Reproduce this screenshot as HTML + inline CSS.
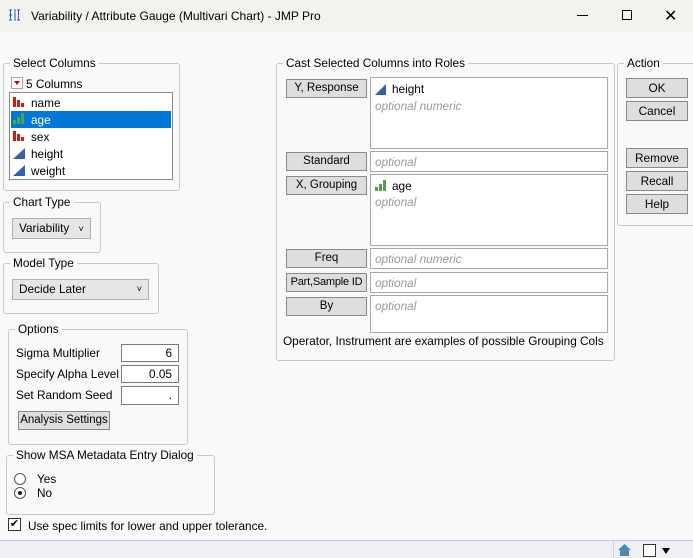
<!DOCTYPE html>
<html><head><meta charset="utf-8"><style>
*{margin:0;padding:0;box-sizing:border-box}
body{width:693px;height:558px;overflow:hidden;background:#f9f9f9;font-family:"Liberation Sans",sans-serif;font-size:11.8px;color:#000;position:relative}
div{white-space:nowrap}
.a{position:absolute}
.title{left:0;top:0;width:693px;height:32px;background:#f2f2ee}
.grp{position:absolute;border:1px solid #c8c8c8;border-radius:3px}
.lbl{position:absolute;top:-8px;left:6px;background:#f9f9f9;padding:0 3px;line-height:14px}
.btn{position:absolute;background:#dedede;border:1px solid #8a8a8a;text-align:center;font-size:11.5px;overflow:hidden}
.box{position:absolute;background:#fff;border:1px solid #a8a8a8}
.opt{color:#999;font-style:italic;position:absolute;left:4px}
.inp{position:absolute;background:#fff;border:1px solid #7a7a7a;text-align:right;padding-right:6px;line-height:16px}
.dd{position:absolute;background:#e6e6e6;border:1px solid #b0b0b0;line-height:19px;padding-left:6px}
.ab{position:absolute;left:626px;width:62px;height:20px;background:#dedede;border:1px solid #8a8a8a;text-align:center;line-height:18px}
</style></head><body>
<div class="a title"></div>
<svg class="a" style="left:8px;top:8px" width="14" height="14" viewBox="0 0 14 14"><g stroke="#3060a0" stroke-width="1" fill="none"><path d="M1 2h3M2.5 2v10M1 12h3M1 7h3M7 1v12M9 2h3M10.5 2v10M9 12h3"/></g></svg>
<div class="a" style="left:31px;top:9px;font-size:12px">Variability / Attribute Gauge (Multivari Chart) - JMP Pro</div>
<div class="a" style="left:577px;top:15px;width:11px;height:1px;background:#000"></div>
<div class="a" style="left:622px;top:10px;width:10px;height:10px;border:1px solid #000"></div>
<div class="a" style="left:664px;top:6px;font-size:16px">✕</div>

<div class="grp" style="left:3px;top:63px;width:177px;height:128px"><div class="lbl">Select Columns</div></div>
<div class="a" style="left:11px;top:77px;width:12px;height:12px;border:1px solid #aaa;background:#fff"><div style="position:absolute;left:2px;top:3px;border-left:3.5px solid transparent;border-right:3.5px solid transparent;border-top:4px solid #c00"></div></div>
<div class="a" style="left:26px;top:77px">5 Columns</div>
<div class="box" style="left:9px;top:92px;width:164px;height:88px;border-color:#888"></div>
<div class="a" style="left:11px;top:111px;width:160px;height:17px;background:#0078d7"></div>
<svg class="a" style="left:13px;top:95px" width="14" height="82" viewBox="0 0 14 82">
<g fill="#c8200e"><rect x="0" y="2" width="3" height="10"/><rect x="4" y="5" width="3" height="7"/><rect x="8" y="8" width="3" height="4"/>
<rect x="0" y="36" width="3" height="10"/><rect x="4" y="39" width="3" height="7"/><rect x="8" y="42" width="3" height="4"/></g>
<g fill="#4ca64c"><rect x="0" y="25" width="3" height="4"/><rect x="4" y="22" width="3" height="7"/><rect x="8" y="18" width="3" height="11"/></g>
<path d="M0 64L12 53V64Z M0 81L12 70V81Z" fill="#3060b0"/></svg>
<div class="a" style="left:31px;top:96px">name</div>
<div class="a" style="left:31px;top:113px;color:#fff">age</div>
<div class="a" style="left:31px;top:130px">sex</div>
<div class="a" style="left:31px;top:147px">height</div>
<div class="a" style="left:31px;top:164px">weight</div>

<div class="grp" style="left:3px;top:202px;width:98px;height:51px"><div class="lbl">Chart Type</div></div>
<div class="dd" style="left:12px;top:218px;width:79px;height:21px">Variability <span style="font-size:9px;margin-left:6px">˅</span></div>
<div class="grp" style="left:3px;top:263px;width:156px;height:51px"><div class="lbl">Model Type</div></div>
<div class="dd" style="left:12px;top:279px;width:137px;height:21px">Decide Later<span style="position:absolute;right:6px;font-size:9px">˅</span></div>

<div class="grp" style="left:8px;top:329px;width:180px;height:116px"><div class="lbl">Options</div></div>
<div class="a" style="left:16px;top:346px">Sigma Multiplier</div>
<div class="a" style="left:16px;top:367px">Specify Alpha Level</div>
<div class="a" style="left:16px;top:388px">Set Random Seed</div>
<div class="inp" style="left:121px;top:344px;width:58px;height:18px">6</div>
<div class="inp" style="left:121px;top:365px;width:58px;height:18px">0.05</div>
<div class="inp" style="left:121px;top:386px;width:58px;height:19px">.</div>
<div class="btn" style="left:18px;top:411px;width:92px;height:19px;line-height:17px">Analysis Settings</div>

<div class="grp" style="left:6px;top:455px;width:209px;height:60px"><div class="lbl">Show MSA Metadata Entry Dialog</div></div>
<div class="a" style="left:14px;top:473px;width:12px;height:12px;border:1px solid #555;border-radius:50%;background:#fff"></div>
<div class="a" style="left:37px;top:472px">Yes</div>
<div class="a" style="left:14px;top:487px;width:12px;height:12px;border:1px solid #555;border-radius:50%;background:#fff"><div style="position:absolute;left:3px;top:3px;width:4px;height:4px;border-radius:50%;background:#222"></div></div>
<div class="a" style="left:37px;top:486px">No</div>
<div class="a" style="left:8px;top:518px;width:13px;height:13px;border:1px solid #333;background:#fff;font-size:11px;line-height:11px;text-align:center">✔</div>
<div class="a" style="left:28px;top:519px">Use spec limits for lower and upper tolerance.</div>

<div class="grp" style="left:276px;top:63px;width:339px;height:298px"><div class="lbl">Cast Selected Columns into Roles</div></div>
<div class="btn" style="left:286px;top:79px;width:81px;height:19px;line-height:17px">Y, Response</div>
<div class="btn" style="left:286px;top:152px;width:81px;height:19px;line-height:17px">Standard</div>
<div class="btn" style="left:286px;top:176px;width:81px;height:19px;line-height:17px">X, Grouping</div>
<div class="btn" style="left:286px;top:249px;width:81px;height:19px;line-height:17px">Freq</div>
<div class="btn" style="left:286px;top:273px;width:81px;height:19px;line-height:17px;font-size:11px;letter-spacing:-0.2px">Part,Sample ID</div>
<div class="btn" style="left:286px;top:297px;width:81px;height:19px;line-height:17px">By</div>
<div class="box" style="left:370px;top:77px;width:238px;height:72px">
<svg class="a" style="left:4px;top:6px" width="12" height="11"><path d="M0 11L11 0V11Z" fill="#3060b0"/></svg>
<div class="a" style="left:21px;top:4px">height</div><div class="opt" style="top:21px">optional numeric</div></div>
<div class="box" style="left:370px;top:151px;width:238px;height:21px"><div class="opt" style="top:3px">optional</div></div>
<div class="box" style="left:370px;top:174px;width:238px;height:72px">
<svg class="a" style="left:4px;top:5px" width="12" height="11"><g fill="#4ca64c"><rect x="0" y="7" width="3" height="4"/><rect x="4" y="4" width="3" height="7"/><rect x="8" y="0" width="3" height="11"/></g></svg>
<div class="a" style="left:21px;top:4px">age</div><div class="opt" style="top:20px">optional</div></div>
<div class="box" style="left:370px;top:248px;width:238px;height:21px"><div class="opt" style="top:3px">optional numeric</div></div>
<div class="box" style="left:370px;top:272px;width:238px;height:21px"><div class="opt" style="top:3px">optional</div></div>
<div class="box" style="left:370px;top:295px;width:238px;height:38px"><div class="opt" style="top:3px">optional</div></div>
<div class="a" style="left:283px;top:334px">Operator, Instrument are examples of possible Grouping Cols</div>

<div class="grp" style="left:617px;top:63px;width:80px;height:163px"><div class="lbl">Action</div></div>
<div class="ab" style="top:78px">OK</div>
<div class="ab" style="top:101px">Cancel</div>
<div class="ab" style="top:148px">Remove</div>
<div class="ab" style="top:171px">Recall</div>
<div class="ab" style="top:194px">Help</div>

<div class="a" style="left:0;top:540px;width:693px;height:1px;background:#c0c8d8"></div>
<div class="a" style="left:0;top:541px;width:693px;height:17px;background:#eef0f5"></div>
<div class="a" style="left:613px;top:541px;width:1px;height:17px;background:#d0d4dc"></div>
<svg class="a" style="left:618px;top:544px" width="13" height="12"><path d="M6.5 0L0 6h2v6h9V6h2Z" fill="#3a8ad8"/><rect x="5" y="7" width="3" height="5" fill="#b07020"/></svg>
<div class="a" style="left:643px;top:544px;width:13px;height:13px;border:1px solid #333;background:#fff"></div>
<div class="a" style="left:662px;top:548px;border-left:4px solid transparent;border-right:4px solid transparent;border-top:6px solid #000"></div>
</body></html>
